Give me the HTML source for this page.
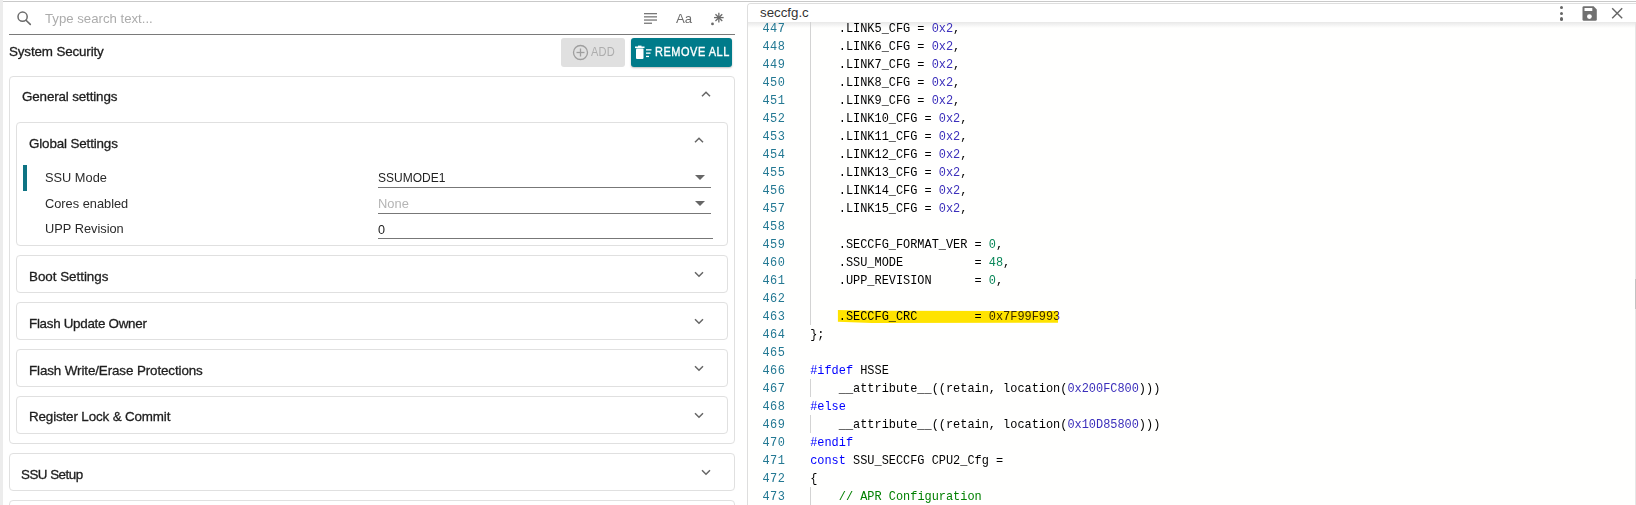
<!DOCTYPE html>
<html><head><meta charset="utf-8">
<style>
*{margin:0;padding:0;box-sizing:border-box}
html,body{width:1636px;height:505px;overflow:hidden;background:#fff;font-family:"Liberation Sans",sans-serif;}
.a{position:absolute}
.t{position:absolute;white-space:pre;line-height:16px}
.strip{left:0;top:0;width:3px;height:505px;background:#ececec}
.topline{left:3px;top:1px;width:1633px;height:1px;background:#c9c9c9}
.card{position:absolute;border:1px solid #e0e0e0;border-radius:4px;background:#fff}
.hd{font-size:13.4px;color:#1e1e1e;-webkit-text-stroke:0.3px #1e1e1e;letter-spacing:-0.14px}
.lbl{font-size:12.8px;color:#2b2b2b}
.chev{position:absolute;width:10px;height:7px}
.uline{position:absolute;height:1px;background:#777}
/* code */
.code{position:absolute;left:747px;top:3px;width:889px;height:502px;border-left:1px solid #dedede;border-top:1px solid #dedede;border-top-left-radius:4px;background:#fffffe;overflow:hidden}
.hdr{position:absolute;left:0;top:0;width:100%;height:18px;background:#fff;z-index:3}
.shadow{position:absolute;left:0;top:18px;width:100%;height:6px;background:linear-gradient(#e8e8e8,rgba(255,255,254,0));z-index:0}
.ln{position:absolute;left:0;width:37.4px;letter-spacing:0.5px;text-align:right;font-family:"Liberation Mono",monospace;font-size:11.92px;color:#237893;line-height:18px;white-space:pre}
.cl{position:absolute;left:62.2px;font-family:"Liberation Mono",monospace;font-size:11.92px;color:#000;line-height:18px;white-space:pre}
.n{color:#098658}.h{color:#3b2fbb}.k{color:#0000ff}.c{color:#008000}
.guide{position:absolute;width:1px;background:#d3d3d3}
.hl{background:#ffe100}
</style></head><body>
<div class="a strip"></div>
<div class="a topline"></div>

<!-- search -->
<svg class="a" style="left:15px;top:9px" width="18" height="18" viewBox="0 0 18 18">
<circle cx="7.6" cy="7.7" r="4.6" fill="none" stroke="#6b6b6b" stroke-width="1.5"/>
<line x1="11" y1="11.2" x2="15.3" y2="15.4" stroke="#6b6b6b" stroke-width="1.6" stroke-linecap="round"/>
</svg>
<div class="t" style="left:45px;top:11px;font-size:13.2px;color:#acacac">Type search text...</div>
<svg class="a" style="left:643px;top:12px" width="15" height="13" viewBox="0 0 15 13">
<rect x="1" y="1" width="13" height="1.3" fill="#777"/>
<rect x="1" y="4.2" width="13" height="1.3" fill="#777"/>
<rect x="1" y="7.4" width="13" height="1.3" fill="#777"/>
<rect x="1" y="10.6" width="8" height="1.3" fill="#777"/>
</svg>
<div class="t" style="left:676px;top:11px;font-size:13.2px;color:#6e6e6e">Aa</div>
<svg class="a" style="left:708px;top:10px" width="18" height="18" viewBox="0 0 18 18">
<circle cx="4.5" cy="13.9" r="1.4" fill="#6a6a6a"/>
<g stroke="#6a6a6a" stroke-width="1.3" stroke-linecap="butt">
<line x1="10.85" y1="2.8" x2="10.85" y2="12.4"/>
<line x1="6.05" y1="7.6" x2="15.65" y2="7.6"/>
<line x1="7.45" y1="4.2" x2="14.25" y2="11"/>
<line x1="14.25" y1="4.2" x2="7.45" y2="11"/>
</g></svg>
<div class="uline" style="left:9px;top:34px;width:726px;background:#7a7a7a"></div>

<div class="t hd" style="left:9px;top:44px">System Security</div>
<!-- ADD -->
<div class="a" style="left:561px;top:38px;width:64px;height:29px;background:#e0e0e0;border-radius:3px"></div>
<svg class="a" style="left:572px;top:44px" width="17" height="17" viewBox="0 0 17 17">
<circle cx="8.5" cy="8.5" r="7" fill="none" stroke="#9e9e9e" stroke-width="1.3"/>
<line x1="8.5" y1="4.5" x2="8.5" y2="12.5" stroke="#9e9e9e" stroke-width="1.3"/>
<line x1="4.5" y1="8.5" x2="12.5" y2="8.5" stroke="#9e9e9e" stroke-width="1.3"/>
</svg>
<div class="t" style="left:591px;top:44px;font-size:12.3px;color:#adadad;letter-spacing:0.2px;transform:scaleX(0.9);transform-origin:0 0">ADD</div>
<!-- REMOVE ALL -->
<div class="a" style="left:631px;top:38px;width:101px;height:29px;background:#007b8a;border-radius:3px;box-shadow:0 1px 2px rgba(0,0,0,0.25)"></div>
<svg class="a" style="left:634px;top:45px" width="20" height="15" viewBox="0 0 20 15">
<rect x="1" y="1.5" width="9.5" height="1.6" fill="#fff"/>
<rect x="4" y="0.6" width="3.5" height="1.4" fill="#fff"/>
<rect x="2" y="3.5" width="7.5" height="10.5" rx="1" fill="#fff"/>
<rect x="12" y="4.2" width="5.5" height="1.3" fill="#fff"/>
<rect x="12" y="7.5" width="4.5" height="1.3" fill="#fff"/>
<rect x="12" y="10.8" width="3" height="1.3" fill="#fff"/>
</svg>
<div class="t" style="left:655px;top:44px;font-size:12.2px;color:#fff;-webkit-text-stroke:0.35px #fff;letter-spacing:0.6px;transform:scaleX(0.9);transform-origin:0 0">REMOVE ALL</div>

<!-- General settings outer card -->
<div class="card" style="left:9px;top:76px;width:726px;height:368px"></div>
<div class="t hd" style="left:22px;top:89px">General settings</div>
<svg class="chev" style="left:701px;top:91px" viewBox="0 0 10 7"><polyline points="1,5.3 5,1.3 9,5.3" fill="none" stroke="#666" stroke-width="1.5"/></svg>

<!-- Global settings card -->
<div class="card" style="left:16px;top:122px;width:712px;height:124px"></div>
<div class="t hd" style="left:29px;top:136px">Global Settings</div>
<svg class="chev" style="left:694px;top:137px" viewBox="0 0 10 7"><polyline points="1,5.3 5,1.3 9,5.3" fill="none" stroke="#666" stroke-width="1.5"/></svg>
<div class="a" style="left:23px;top:165px;width:4px;height:26px;background:#0e7383"></div>
<div class="t lbl" style="left:45px;top:170px">SSU Mode</div>
<div class="t lbl" style="left:45px;top:196px">Cores enabled</div>
<div class="t lbl" style="left:45px;top:221px">UPP Revision</div>
<div class="t" style="left:378px;top:170px;font-size:12px;color:#222">SSUMODE1</div>
<div class="t" style="left:378px;top:196px;font-size:12.9px;color:#b5b5b5">None</div>
<div class="t" style="left:378px;top:222px;font-size:12.6px;color:#222">0</div>
<div class="uline" style="left:378px;top:187px;width:333px;background:#777"></div>
<div class="uline" style="left:378px;top:213px;width:333px;background:#777"></div>
<div class="uline" style="left:378px;top:238px;width:335px;background:#777"></div>
<svg class="a" style="left:695px;top:175px" width="10" height="5" viewBox="0 0 10 5"><polygon points="0,0 10,0 5,5" fill="#666"/></svg>
<svg class="a" style="left:695px;top:201px" width="10" height="5" viewBox="0 0 10 5"><polygon points="0,0 10,0 5,5" fill="#666"/></svg>

<!-- collapsed cards -->
<div class="card" style="left:16px;top:255px;width:712px;height:38px"></div>
<div class="t hd" style="left:29px;top:269px;letter-spacing:-0.02px">Boot Settings</div>
<svg class="chev" style="left:694px;top:271px" viewBox="0 0 10 7"><polyline points="1,1.3 5,5.3 9,1.3" fill="none" stroke="#666" stroke-width="1.5"/></svg>
<div class="card" style="left:16px;top:302px;width:712px;height:38px"></div>
<div class="t hd" style="left:29px;top:316px;letter-spacing:-0.29px">Flash Update Owner</div>
<svg class="chev" style="left:694px;top:318px" viewBox="0 0 10 7"><polyline points="1,1.3 5,5.3 9,1.3" fill="none" stroke="#666" stroke-width="1.5"/></svg>
<div class="card" style="left:16px;top:349px;width:712px;height:38px"></div>
<div class="t hd" style="left:29px;top:363px;letter-spacing:-0.11px">Flash Write/Erase Protections</div>
<svg class="chev" style="left:694px;top:365px" viewBox="0 0 10 7"><polyline points="1,1.3 5,5.3 9,1.3" fill="none" stroke="#666" stroke-width="1.5"/></svg>
<div class="card" style="left:16px;top:396px;width:712px;height:38px"></div>
<div class="t hd" style="left:29px;top:409px">Register Lock &amp; Commit</div>
<svg class="chev" style="left:694px;top:412px" viewBox="0 0 10 7"><polyline points="1,1.3 5,5.3 9,1.3" fill="none" stroke="#666" stroke-width="1.5"/></svg>

<div class="card" style="left:9px;top:453px;width:726px;height:38px"></div>
<div class="t hd" style="left:21px;top:467px;letter-spacing:-0.52px">SSU Setup</div>
<svg class="chev" style="left:701px;top:469px" viewBox="0 0 10 7"><polyline points="1,1.3 5,5.3 9,1.3" fill="none" stroke="#666" stroke-width="1.5"/></svg>
<div class="card" style="left:9px;top:500px;width:726px;height:38px"></div>

<!-- code panel -->
<div class="code">
 <div class="hdr">
  <div class="t" style="left:12px;top:1px;font-size:13.3px;color:#333">seccfg.c</div>
  <div class="a" style="left:811.7px;top:1.9px;width:3.5px;height:3.5px;border-radius:50%;background:#666"></div>
  <div class="a" style="left:811.7px;top:7.8px;width:3.5px;height:3.5px;border-radius:50%;background:#666"></div>
  <div class="a" style="left:811.7px;top:13.4px;width:3.5px;height:3.5px;border-radius:50%;background:#666"></div>
  <svg class="a" style="left:834px;top:2px" width="16" height="16" viewBox="0 0 16 16">
   <path d="M0.5 1.6 Q0.5 0.2 1.9 0.2 H11.6 L14.8 3.4 V13.4 Q14.8 14.8 13.4 14.8 H1.9 Q0.5 14.8 0.5 13.4 Z" fill="#707070"/>
   <rect x="2.5" y="2" width="7.8" height="3" fill="#fff"/>
   <circle cx="7.4" cy="10.6" r="2.4" fill="#fff"/>
  </svg>
  <svg class="a" style="left:863px;top:3.2px" width="12" height="12" viewBox="0 0 12 12">
   <line x1="1.2" y1="1.2" x2="11.2" y2="11.2" stroke="#666" stroke-width="1.4"/>
   <line x1="11.2" y1="1.2" x2="1.2" y2="11.2" stroke="#666" stroke-width="1.4"/>
  </svg>
 </div>
 <div class="shadow"></div>
 <div class="a" style="left:887px;top:18px;width:1px;height:500px;background:#e6e6e6;z-index:4"></div>
 <div class="a" style="left:887px;top:275px;width:1px;height:30px;background:#c2c2c2;z-index:4"></div>
 <div id="lines">
<div class="ln" style="top:16px">447</div>
<div class="cl" style="top:16px">    .LINK5_CFG = <span class="h">0x2</span>,</div>
<div class="ln" style="top:34px">448</div>
<div class="cl" style="top:34px">    .LINK6_CFG = <span class="h">0x2</span>,</div>
<div class="ln" style="top:52px">449</div>
<div class="cl" style="top:52px">    .LINK7_CFG = <span class="h">0x2</span>,</div>
<div class="ln" style="top:70px">450</div>
<div class="cl" style="top:70px">    .LINK8_CFG = <span class="h">0x2</span>,</div>
<div class="ln" style="top:88px">451</div>
<div class="cl" style="top:88px">    .LINK9_CFG = <span class="h">0x2</span>,</div>
<div class="ln" style="top:106px">452</div>
<div class="cl" style="top:106px">    .LINK10_CFG = <span class="h">0x2</span>,</div>
<div class="ln" style="top:124px">453</div>
<div class="cl" style="top:124px">    .LINK11_CFG = <span class="h">0x2</span>,</div>
<div class="ln" style="top:142px">454</div>
<div class="cl" style="top:142px">    .LINK12_CFG = <span class="h">0x2</span>,</div>
<div class="ln" style="top:160px">455</div>
<div class="cl" style="top:160px">    .LINK13_CFG = <span class="h">0x2</span>,</div>
<div class="ln" style="top:178px">456</div>
<div class="cl" style="top:178px">    .LINK14_CFG = <span class="h">0x2</span>,</div>
<div class="ln" style="top:196px">457</div>
<div class="cl" style="top:196px">    .LINK15_CFG = <span class="h">0x2</span>,</div>
<div class="ln" style="top:214px">458</div>
<div class="cl" style="top:214px"></div>
<div class="ln" style="top:232px">459</div>
<div class="cl" style="top:232px">    .SECCFG_FORMAT_VER = <span class="n">0</span>,</div>
<div class="ln" style="top:250px">460</div>
<div class="cl" style="top:250px">    .SSU_MODE          = <span class="n">48</span>,</div>
<div class="ln" style="top:268px">461</div>
<div class="cl" style="top:268px">    .UPP_REVISION      = <span class="n">0</span>,</div>
<div class="ln" style="top:286px">462</div>
<div class="cl" style="top:286px"></div>
<div class="ln" style="top:304px">463</div>
<div class="cl" style="top:304px">    .SECCFG_CRC        = <span class="h">0x7F99F993</span></div>
<div class="ln" style="top:322px">464</div>
<div class="cl" style="top:322px">};</div>
<div class="ln" style="top:340px">465</div>
<div class="cl" style="top:340px"></div>
<div class="ln" style="top:358px">466</div>
<div class="cl" style="top:358px"><span class="k">#ifdef</span> HSSE</div>
<div class="ln" style="top:376px">467</div>
<div class="cl" style="top:376px">    __attribute__((retain, location(<span class="h">0x200FC800</span>)))</div>
<div class="ln" style="top:394px">468</div>
<div class="cl" style="top:394px"><span class="k">#else</span></div>
<div class="ln" style="top:412px">469</div>
<div class="cl" style="top:412px">    __attribute__((retain, location(<span class="h">0x10D85800</span>)))</div>
<div class="ln" style="top:430px">470</div>
<div class="cl" style="top:430px"><span class="k">#endif</span></div>
<div class="ln" style="top:448px">471</div>
<div class="cl" style="top:448px"><span class="k">const</span> SSU_SECCFG CPU2_Cfg =</div>
<div class="ln" style="top:466px">472</div>
<div class="cl" style="top:466px">{</div>
<div class="ln" style="top:484px">473</div>
<div class="cl" style="top:484px">    <span class="c">// APR Configuration</span></div>
<div class="ln" style="top:502px">474</div>
<div class="cl" style="top:502px">    .APR_CFG = <span class="h">0x0</span>,</div>
<div class="guide" style="left:62px;top:0px;height:321px"></div>
<div class="guide" style="left:62px;top:375px;height:18px"></div>
<div class="guide" style="left:62px;top:411px;height:18px"></div>
<div class="guide" style="left:62px;top:483px;height:18px"></div>
<div class="guide" style="left:62px;top:501px;height:18px"></div>
<svg class="a" style="left:0;top:0;z-index:1;mix-blend-mode:multiply" width="888" height="500"><polygon points="89.9,306 124,306.8 310,307 310,318.8 124,319 89.9,317.8" fill="#ffe300"/></svg>
</div>
</div>
</div>
</div>
</body></html>
